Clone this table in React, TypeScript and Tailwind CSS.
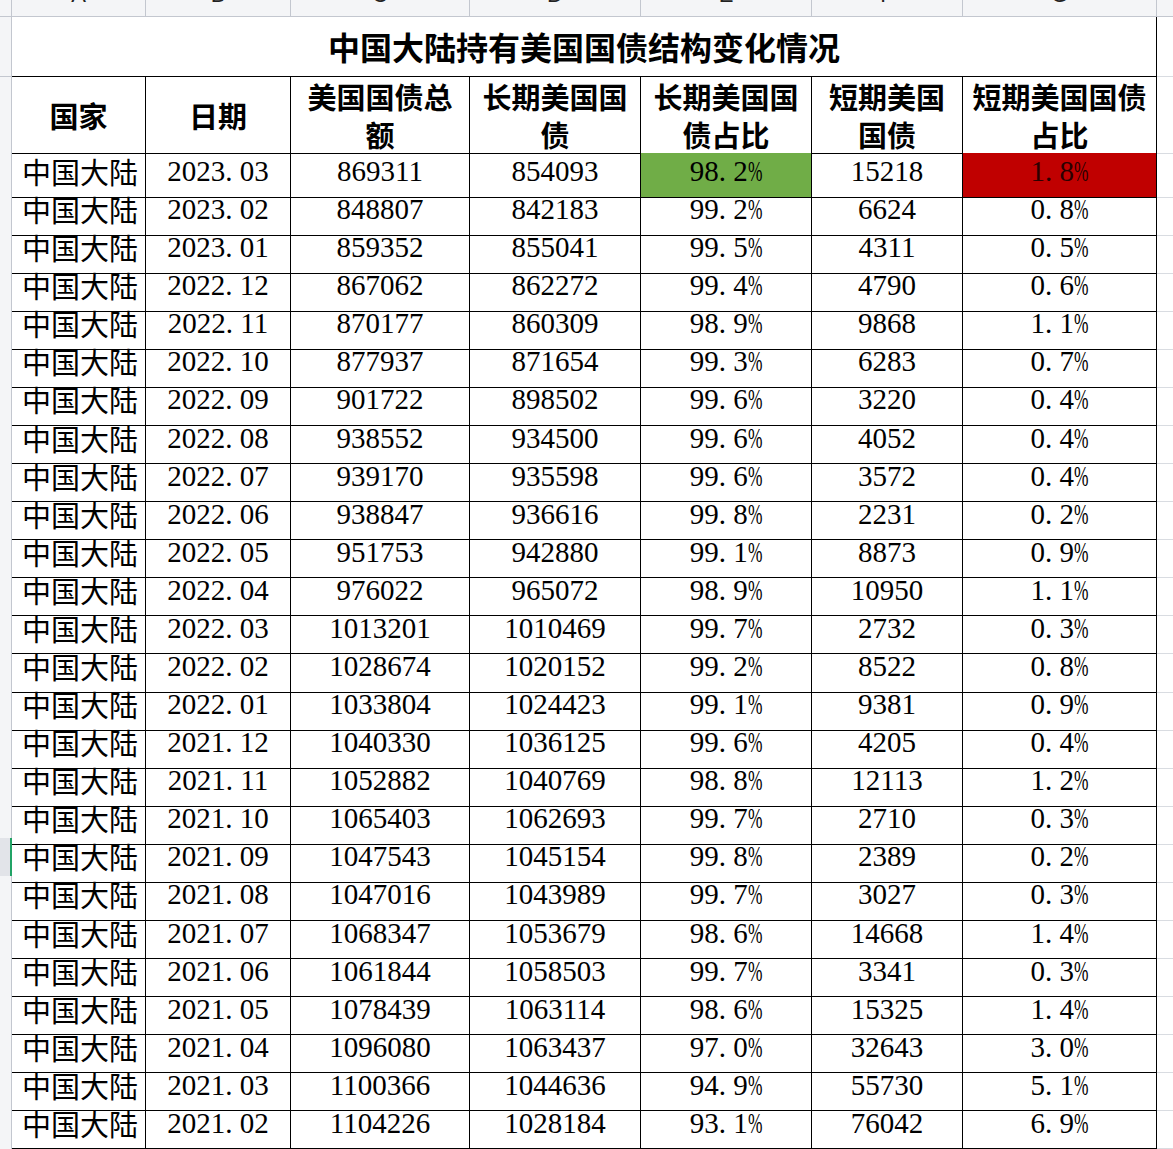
import React from "react"

const rows: [string, string, string, string, string, string][] = [
  ["2023.03", "869311", "854093", "98.2%", "15218", "1.8%"],
  ["2023.02", "848807", "842183", "99.2%", "6624", "0.8%"],
  ["2023.01", "859352", "855041", "99.5%", "4311", "0.5%"],
  ["2022.12", "867062", "862272", "99.4%", "4790", "0.6%"],
  ["2022.11", "870177", "860309", "98.9%", "9868", "1.1%"],
  ["2022.10", "877937", "871654", "99.3%", "6283", "0.7%"],
  ["2022.09", "901722", "898502", "99.6%", "3220", "0.4%"],
  ["2022.08", "938552", "934500", "99.6%", "4052", "0.4%"],
  ["2022.07", "939170", "935598", "99.6%", "3572", "0.4%"],
  ["2022.06", "938847", "936616", "99.8%", "2231", "0.2%"],
  ["2022.05", "951753", "942880", "99.1%", "8873", "0.9%"],
  ["2022.04", "976022", "965072", "98.9%", "10950", "1.1%"],
  ["2022.03", "1013201", "1010469", "99.7%", "2732", "0.3%"],
  ["2022.02", "1028674", "1020152", "99.2%", "8522", "0.8%"],
  ["2022.01", "1033804", "1024423", "99.1%", "9381", "0.9%"],
  ["2021.12", "1040330", "1036125", "99.6%", "4205", "0.4%"],
  ["2021.11", "1052882", "1040769", "98.8%", "12113", "1.2%"],
  ["2021.10", "1065403", "1062693", "99.7%", "2710", "0.3%"],
  ["2021.09", "1047543", "1045154", "99.8%", "2389", "0.2%"],
  ["2021.08", "1047016", "1043989", "99.7%", "3027", "0.3%"],
  ["2021.07", "1068347", "1053679", "98.6%", "14668", "1.4%"],
  ["2021.06", "1061844", "1058503", "99.7%", "3341", "0.3%"],
  ["2021.05", "1078439", "1063114", "98.6%", "15325", "1.4%"],
  ["2021.04", "1096080", "1063437", "97.0%", "32643", "3.0%"],
  ["2021.03", "1100366", "1044636", "94.9%", "55730", "5.1%"],
  ["2021.02", "1104226", "1028184", "93.1%", "76042", "6.9%"],
]

const cols = "grid grid-cols-[12px_134px_145px_179px_171px_171px_151px_194px_1fr]"
const letters = ["A", "B", "C", "D", "E", "F", "G"]
const cell = "flex items-center justify-center border-r border-b border-black"

// SimSun-style half-width punctuation
function Num({ value }: { value: string }) {
  return (
    <span className="-translate-y-[3px] whitespace-nowrap">
      {value.split("").map((ch, i) => {
        if (ch === ".") {
          return (
            <span key={i} className="inline-block w-[0.5em] text-left">
              .
            </span>
          )
        }
        if (ch === "%") {
          return (
            <span key={i} className="inline-block w-[0.5em] text-left">
              <span className="inline-block origin-left scale-x-[0.6]">%</span>
            </span>
          )
        }
        return ch
      })}
    </span>
  )
}

function HeaderCell({ lines }: { lines: string[] }) {
  return (
    <div className="flex flex-col items-center justify-center border-r border-b border-black font-bold leading-[38px]">
      {lines.map((l) => (
        <span key={l} className="translate-y-[3px] whitespace-nowrap">
          {l}
        </span>
      ))}
    </div>
  )
}

export default function App() {
  return (
    <div className="h-[1149px] w-[1173px] overflow-hidden bg-white font-['Liberation_Serif','Noto_Sans_CJK_SC',serif] text-[29px] text-black">
      {/* column letters */}
      <div className={`${cols} h-[17px] border-b border-[#c3c7cf] bg-[#f4f5f7]`}>
        <div className="border-r border-[#c3c7cf]" />
        {letters.map((l) => (
          <div
            key={l}
            className="flex justify-center overflow-hidden border-r border-[#c3c7cf] font-['Liberation_Sans',sans-serif] text-[22px] leading-[22px] text-[#222]"
          >
            <span className="-translate-y-[16px]">{l}</span>
          </div>
        ))}
        <div />
      </div>

      {/* title */}
      <div className={`${cols} h-[60px]`}>
        <div className="border-r border-b border-[#c3c7cf] bg-[#f4f5f7]" />
        <div className="col-span-7 flex items-center justify-center border-r border-b border-black pt-[4px] text-[32px] font-bold leading-none">
          中国大陆持有美国国债结构变化情况
        </div>
        <div className="border-b border-[#d9dce1]" />
      </div>

      {/* headers */}
      <div className={`${cols} h-[76px]`}>
        <div className="border-r border-b border-[#c3c7cf] bg-[#f4f5f7]" />
        <HeaderCell lines={["国家"]} />
        <HeaderCell lines={["日期"]} />
        <HeaderCell lines={["美国国债总", "额"]} />
        <HeaderCell lines={["长期美国国", "债"]} />
        <HeaderCell lines={["长期美国国", "债占比"]} />
        <HeaderCell lines={["短期美国", "国债"]} />
        <HeaderCell lines={["短期美国国债", "占比"]} />
        <div className="border-b border-[#d9dce1]" />
      </div>

      {rows.map((r, i) => {
        const selected = r[0] === "2021.09"
        return (
          <div key={r[0]} className={`${cols} h-[38.08px]`}>
            <div
              className={
                selected
                  ? "border-r-2 border-b border-r-[#21a366] border-b-[#c3c7cf] bg-[#e2e4e9]"
                  : "border-r border-b border-[#c3c7cf] bg-[#f4f5f7]"
              }
            />
            <div className="flex items-center border-r border-b border-black pl-[10px] font-['Noto_Sans_CJK_SC',sans-serif]">
              <span className="-translate-y-[3px]">中国大陆</span>
            </div>
            <div className={cell}>
              <Num value={r[0]} />
            </div>
            <div className={cell}>
              <Num value={r[1]} />
            </div>
            <div className={cell}>
              <Num value={r[2]} />
            </div>
            <div className={`${cell} ${i === 0 ? "bg-[#70ad47]" : ""}`}>
              <Num value={r[3]} />
            </div>
            <div className={cell}>
              <Num value={r[4]} />
            </div>
            <div className={`${cell} ${i === 0 ? "bg-[#c00000] text-[#2a0000]" : ""}`}>
              <Num value={r[5]} />
            </div>
            <div className="border-b border-[#d9dce1]" />
          </div>
        )
      })}

      {/* next empty row */}
      <div className={`${cols} h-[38px]`}>
        <div className="border-r border-[#c3c7cf] bg-[#f4f5f7]" />
        {letters.map((l) => (
          <div key={l} className="border-r border-black" />
        ))}
        <div />
      </div>
    </div>
  )
}
